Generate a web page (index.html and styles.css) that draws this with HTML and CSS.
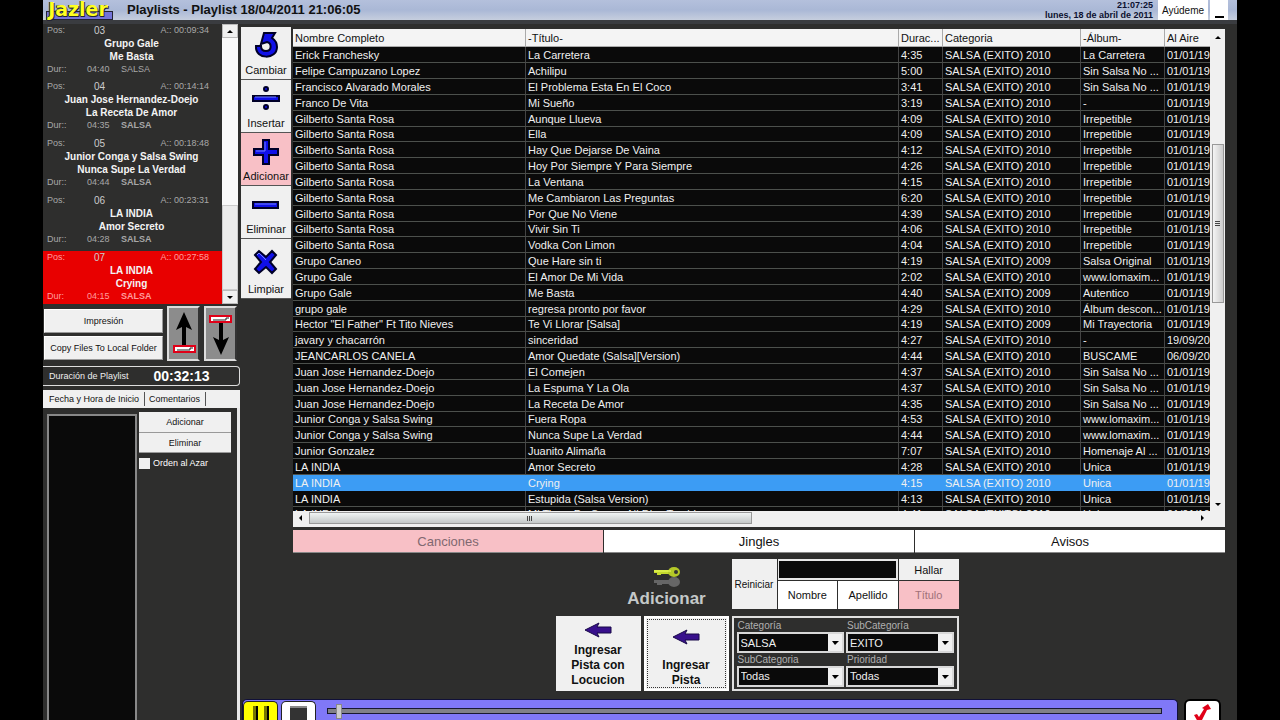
FILE: index.html
```
<!DOCTYPE html>
<html lang="es">
<head>
    <meta charset="UTF-8">
    <meta name="viewport" content="width=device-width, initial-scale=1.0">
    <title>Jazler - Playlists</title>
    <link rel="stylesheet" href="styles.css">
</head>
<body>

<div class="app">
    <header class="topbar">
        <div class="logo"><span>Jazler</span></div>
        <h1>Playlists - Playlist 18/04/2011 21:06:05</h1>
        <div class="clock">
            <div>21:07:25</div>
            <div>lunes, 18 de abril de 2011</div>
        </div>
        <button class="help">Ayúdeme</button>
        <button class="minimize" aria-label="Minimizar"><i></i></button>
    </header>

    <div class="main">
        <aside class="sidebar">
            <div class="queue">
                <div class="songs">
                    <div class="song">
                        <div class="meta"><span>Pos:</span><b>03</b><span class="at">A:: 00:09:34</span></div>
                        <div class="artist">Grupo Gale</div>
                        <div class="track">Me Basta</div>
                        <div class="meta"><span>Dur::</span><span class="dur">04:40</span><span>SALSA</span></div>
                    </div>
                    <div class="song">
                        <div class="meta"><span>Pos:</span><b>04</b><span class="at">A:: 00:14:14</span></div>
                        <div class="artist">Juan Jose Hernandez-Doejo</div>
                        <div class="track">La Receta De Amor</div>
                        <div class="meta"><span>Dur::</span><span class="dur">04:35</span><span class="cat">SALSA</span></div>
                    </div>
                    <div class="song">
                        <div class="meta"><span>Pos:</span><b>05</b><span class="at">A:: 00:18:48</span></div>
                        <div class="artist">Junior Conga y Salsa Swing</div>
                        <div class="track">Nunca Supe La Verdad</div>
                        <div class="meta"><span>Dur::</span><span class="dur">04:44</span><span class="cat">SALSA</span></div>
                    </div>
                    <div class="song">
                        <div class="meta"><span>Pos:</span><b>06</b><span class="at">A:: 00:23:31</span></div>
                        <div class="artist">LA INDIA</div>
                        <div class="track">Amor Secreto</div>
                        <div class="meta"><span>Dur::</span><span class="dur">04:28</span><span class="cat">SALSA</span></div>
                    </div>
                    <div class="song current">
                        <div class="meta"><span>Pos:</span><b>07</b><span class="at">A:: 00:27:58</span></div>
                        <div class="artist">LA INDIA</div>
                        <div class="track">Crying</div>
                        <div class="meta"><span>Dur:</span><span class="dur">04:15</span><span class="cat">SALSA</span></div>
                    </div>
                </div>
                <div class="queue-scroll" aria-hidden="true">
                    <div class="arrow"><svg width="6" height="3"><path d="M0 3 3 0 6 3z"/></svg></div>
                    <div class="track-space"></div>
                    <div class="thumb"></div>
                    <div class="arrow"><svg width="6" height="3"><path d="M0 0 3 3 6 0z"/></svg></div>
                </div>
            </div>

            <div class="actions">
                <div class="wide">
                    <button>Impresión</button>
                    <button>Copy Files To Local Folder</button>
                </div>
                <button class="move" aria-label="Subir">
                    <svg width="26" height="48" viewBox="0 0 26 48">
                        <path d="M13 2 21 20 15 17V36H11V17L5 20z"/>
                        <rect x="3" y="36" width="21" height="6" fill="#fff" stroke="#e00018" stroke-width="2"/>
                        <path d="M6 40H19V38H22" fill="none" stroke="#222"/>
                    </svg>
                </button>
                <button class="move" aria-label="Bajar">
                    <svg width="26" height="48" viewBox="0 0 26 48">
                        <path d="M13 45 21 27 15 30V10H11V30L5 27z"/>
                        <rect x="2" y="6" width="21" height="6" fill="#fff" stroke="#e00018" stroke-width="2"/>
                        <path d="M5 10H18V8H21" fill="none" stroke="#222"/>
                    </svg>
                </button>
            </div>

            <div class="duration"><span>Duración de Playlist</span><b>00:32:13</b></div>

            <div class="side-tabs">
                <button>Fecha y Hora de Inicio</button>
                <button>Comentarios</button>
            </div>
            <div class="schedule">
                <div class="dates"></div>
                <div class="schedule-actions">
                    <button>Adicionar</button>
                    <button>Eliminar</button>
                    <label><input type="checkbox">Orden al Azar</label>
                </div>
            </div>
        </aside>

        <section class="content">
            <div class="browser">
                <nav class="tools">
                    <button>
                        <svg width="26" height="26" viewBox="0 0 26 26"><path d="M22 1H11L8 12L14 10C19 11 19 19 13 19C10 19 8 17 8 14H3C2 28 24 28 24 15C24 11 22 8 19 6z"/></svg>
                        Cambiar
                    </button>
                    <button>
                        <svg width="28" height="26" viewBox="0 0 28 26"><path d="M1 11H27V16H1z"/><circle cx="14" cy="4" r="2"/><circle cx="14" cy="22" r="2"/><path class="shine" d="M3 12H24"/></svg>
                        Insertar
                    </button>
                    <button class="active">
                        <svg width="28" height="28" viewBox="0 0 28 28"><path d="M11 2H17V11H26V17H17V26H11V17H2V11H11z"/><path class="shine" d="M13 4V13H4"/></svg>
                        Adicionar
                    </button>
                    <button>
                        <svg width="28" height="26" viewBox="0 0 28 26"><path d="M1 11H26V17H1z"/><path class="shine" d="M3 13H24"/></svg>
                        Eliminar
                    </button>
                    <button class="tall">
                        <svg width="28" height="28" viewBox="0 0 28 28"><path d="M3 7 7 3 14 9 20 3 24 7 18 14 24 21 20 25 14 19 7 25 3 21 9 14z"/><path class="shine" d="M5 7 7 5 14 12"/></svg>
                        Limpiar
                    </button>
                </nav>

                <div class="library">
                    <div class="library-view">
                        <div class="rows">
                            <table>
                                <colgroup><col class="c-name"><col class="c-title"><col class="c-dur"><col class="c-cat"><col class="c-album"><col class="c-date"></colgroup>
                                <thead>
                                    <tr><th>Nombre Completo</th><th>-Título-</th><th>Durac...</th><th>Categoria</th><th>-Álbum-</th><th>Al Aire</th></tr>
                                </thead>
                                <tbody>
                                    <tr><td>Erick Franchesky</td><td>La Carretera</td><td>4:35</td><td>SALSA (EXITO) 2010</td><td>La Carretera</td><td>01/01/19</td></tr>
                                    <tr><td>Felipe Campuzano Lopez</td><td>Achilipu</td><td>5:00</td><td>SALSA (EXITO) 2010</td><td>Sin Salsa No ...</td><td>01/01/19</td></tr>
                                    <tr><td>Francisco Alvarado Morales</td><td>El Problema Esta En El Coco</td><td>3:41</td><td>SALSA (EXITO) 2010</td><td>Sin Salsa No ...</td><td>01/01/19</td></tr>
                                    <tr><td>Franco De Vita</td><td>Mi Sueño</td><td>3:19</td><td>SALSA (EXITO) 2010</td><td>-</td><td>01/01/19</td></tr>
                                    <tr><td>Gilberto Santa Rosa</td><td>Aunque Llueva</td><td>4:09</td><td>SALSA (EXITO) 2010</td><td>Irrepetible</td><td>01/01/19</td></tr>
                                    <tr><td>Gilberto Santa Rosa</td><td>Ella</td><td>4:09</td><td>SALSA (EXITO) 2010</td><td>Irrepetible</td><td>01/01/19</td></tr>
                                    <tr><td>Gilberto Santa Rosa</td><td>Hay Que Dejarse De Vaina</td><td>4:12</td><td>SALSA (EXITO) 2010</td><td>Irrepetible</td><td>01/01/19</td></tr>
                                    <tr><td>Gilberto Santa Rosa</td><td>Hoy Por Siempre Y Para Siempre</td><td>4:26</td><td>SALSA (EXITO) 2010</td><td>Irrepetible</td><td>01/01/19</td></tr>
                                    <tr><td>Gilberto Santa Rosa</td><td>La Ventana</td><td>4:15</td><td>SALSA (EXITO) 2010</td><td>Irrepetible</td><td>01/01/19</td></tr>
                                    <tr><td>Gilberto Santa Rosa</td><td>Me Cambiaron Las Preguntas</td><td>6:20</td><td>SALSA (EXITO) 2010</td><td>Irrepetible</td><td>01/01/19</td></tr>
                                    <tr><td>Gilberto Santa Rosa</td><td>Por Que No Viene</td><td>4:39</td><td>SALSA (EXITO) 2010</td><td>Irrepetible</td><td>01/01/19</td></tr>
                                    <tr><td>Gilberto Santa Rosa</td><td>Vivir Sin Ti</td><td>4:06</td><td>SALSA (EXITO) 2010</td><td>Irrepetible</td><td>01/01/19</td></tr>
                                    <tr><td>Gilberto Santa Rosa</td><td>Vodka Con Limon</td><td>4:04</td><td>SALSA (EXITO) 2010</td><td>Irrepetible</td><td>01/01/19</td></tr>
                                    <tr><td>Grupo Caneo</td><td>Que Hare sin ti</td><td>4:19</td><td>SALSA (EXITO) 2009</td><td>Salsa Original</td><td>01/01/19</td></tr>
                                    <tr><td>Grupo Gale</td><td>El Amor De Mi Vida</td><td>2:02</td><td>SALSA (EXITO) 2010</td><td>www.lomaxim...</td><td>01/01/19</td></tr>
                                    <tr><td>Grupo Gale</td><td>Me Basta</td><td>4:40</td><td>SALSA (EXITO) 2009</td><td>Autentico</td><td>01/01/19</td></tr>
                                    <tr><td>grupo gale</td><td>regresa pronto por favor</td><td>4:29</td><td>SALSA (EXITO) 2010</td><td>Álbum descon...</td><td>01/01/19</td></tr>
                                    <tr><td>Hector "El Father" Ft Tito Nieves</td><td>Te Vi Llorar [Salsa]</td><td>4:19</td><td>SALSA (EXITO) 2009</td><td>Mi Trayectoria</td><td>01/01/19</td></tr>
                                    <tr><td>javary y chacarrón</td><td>sinceridad</td><td>4:27</td><td>SALSA (EXITO) 2010</td><td>-</td><td>19/09/20</td></tr>
                                    <tr><td>JEANCARLOS CANELA</td><td>Amor Quedate (Salsa][Version)</td><td>4:44</td><td>SALSA (EXITO) 2010</td><td>BUSCAME</td><td>06/09/20</td></tr>
                                    <tr><td>Juan Jose Hernandez-Doejo</td><td>El Comejen</td><td>4:37</td><td>SALSA (EXITO) 2010</td><td>Sin Salsa No ...</td><td>01/01/19</td></tr>
                                    <tr><td>Juan Jose Hernandez-Doejo</td><td>La Espuma Y La Ola</td><td>4:37</td><td>SALSA (EXITO) 2010</td><td>Sin Salsa No ...</td><td>01/01/19</td></tr>
                                    <tr><td>Juan Jose Hernandez-Doejo</td><td>La Receta De Amor</td><td>4:35</td><td>SALSA (EXITO) 2010</td><td>Sin Salsa No ...</td><td>01/01/19</td></tr>
                                    <tr><td>Junior Conga y Salsa Swing</td><td>Fuera Ropa</td><td>4:53</td><td>SALSA (EXITO) 2010</td><td>www.lomaxim...</td><td>01/01/19</td></tr>
                                    <tr><td>Junior Conga y Salsa Swing</td><td>Nunca Supe La Verdad</td><td>4:44</td><td>SALSA (EXITO) 2010</td><td>www.lomaxim...</td><td>01/01/19</td></tr>
                                    <tr><td>Junior Gonzalez</td><td>Juanito Alimaña</td><td>7:07</td><td>SALSA (EXITO) 2010</td><td>Homenaje Al ...</td><td>01/01/19</td></tr>
                                    <tr><td>LA INDIA</td><td>Amor Secreto</td><td>4:28</td><td>SALSA (EXITO) 2010</td><td>Unica</td><td>01/01/19</td></tr>
                                    <tr class="selected"><td>LA INDIA</td><td>Crying</td><td>4:15</td><td>SALSA (EXITO) 2010</td><td>Unica</td><td>01/01/19</td></tr>
                                    <tr><td>LA INDIA</td><td>Estupida (Salsa Version)</td><td>4:13</td><td>SALSA (EXITO) 2010</td><td>Unica</td><td>01/01/19</td></tr>
                                    <tr><td>LA INDIA</td><td>Mi Tierra De Somos Ni Dios Tambien</td><td>4:41</td><td>SALSA (EXITO) 2010</td><td>Unica</td><td>01/01/19</td></tr>
                                </tbody>
                            </table>
                        </div>
                        <div class="vscroll" aria-hidden="true">
                            <svg width="6" height="3"><path d="M0 3 3 0 6 3z"/></svg>
                            <div class="before"></div>
                            <div class="thumb"><i></i></div>
                            <div class="after"></div>
                            <svg width="6" height="3"><path d="M0 0 3 3 6 0z"/></svg>
                        </div>
                    </div>
                    <div class="hscroll" aria-hidden="true">
                        <svg width="3" height="6"><path d="M3 0 0 3 3 6z"/></svg>
                        <div class="thumb"><i></i></div>
                        <div class="after"></div>
                        <svg width="3" height="6"><path d="M0 0 3 3 0 6z"/></svg>
                    </div>
                </div>
            </div>

            <div class="tabs">
                <button class="active">Canciones</button>
                <button>Jingles</button>
                <button>Avisos</button>
            </div>

            <div class="controls">
                <div class="insert">
                    <div class="mode">
                        <svg width="28" height="22" viewBox="0 0 28 22">
                            <g fill="#666"><path d="M1 14H17V18H9V19H4V17H1z"/><ellipse cx="21" cy="16" rx="6" ry="5"/></g>
                            <path d="M1 4H16V8H8V9H4V7H1z" fill="#c4d82e"/>
                            <ellipse cx="21" cy="6" rx="6" ry="5" fill="#b4c828"/>
                            <path d="M1 5H18" stroke="#f0ff60"/>
                            <circle cx="23" cy="6" r="2" fill="#333"/>
                        </svg>
                        <h2>Adicionar</h2>
                    </div>
                    <div class="insert-buttons">
                        <button>
                            <svg width="28" height="16" viewBox="0 0 28 16"><path d="M1 8 15 1 13 5H27V11H13L15 15z"/></svg>
                            Ingresar<br>Pista con<br>Locucion
                        </button>
                        <button class="focused">
                            <svg width="28" height="16" viewBox="0 0 28 16"><path d="M1 8 15 1 13 5H27V11H13L15 15z"/></svg>
                            Ingresar<br>Pista
                        </button>
                    </div>
                </div>

                <div class="finder">
                    <form class="search">
                        <button type="reset" class="reset">Reiniciar</button>
                        <input type="text" aria-label="Buscar">
                        <button type="button" class="find">Hallar</button>
                        <button type="button">Nombre</button>
                        <button type="button">Apellido</button>
                        <button type="button" class="active">Título</button>
                    </form>
                    <div class="filters">
                        <div>
                            <label for="cat">Categoría</label>
                            <select id="cat"><option>SALSA</option></select>
                        </div>
                        <div>
                            <label for="subcat">SubCategoría</label>
                            <select id="subcat"><option>EXITO</option></select>
                        </div>
                        <div>
                            <label for="subcat2">SubCategoria</label>
                            <select id="subcat2"><option>Todas</option></select>
                        </div>
                        <div>
                            <label for="prio">Prioridad</label>
                            <select id="prio"><option>Todas</option></select>
                        </div>
                    </div>
                </div>
            </div>

            <footer class="footer">
                <div class="player">
                    <button class="pause" aria-label="Pausa"><i></i><i></i></button>
                    <button class="stop" aria-label="Parar"><i></i></button>
                    <input type="range" min="0" max="100" value="1" aria-label="Posición">
                </div>
                <button class="accept" aria-label="Aceptar">
                    <svg width="20" height="18" viewBox="0 0 20 18"><path d="M1 11 4 10 6 13 11 5 9 4 15 0 18 5 14 6 8 18H5z" fill="#e00018"/></svg>
                </button>
            </footer>
        </section>
    </div>
</div>

</body>
</html>
```
FILE: styles.css
```
* {
    box-sizing: border-box;
}

body {
    margin: 0;
    background-color: #000;
    font-family: "Liberation Sans", Arial, sans-serif;
    font-size: 11px;
    color: #111;
}

button {
    padding: 0;
    border: 0;
    border-radius: 0;
    background-color: #f0f0f0;
    color: #111;
    font-family: inherit;
    font-size: 11px;
}

h1, h2 {
    margin: 0;
}

svg {
    display: block;
    flex: none;
}

.app {
    display: flex;
    flex-direction: column;
    height: 100vh;
    margin: 0 43px;
    overflow: hidden;
    background-color: #2e2e2d;
}

/* top bar */
.topbar {
    display: flex;
    flex: none;
    height: 24px;
    padding-right: 9px;
    border-bottom: 4px solid #3a3c40;
    background: linear-gradient(#b4c0dc, #aab8d6 50%, #c6cede);
}

.logo {
    display: flex;
    align-items: flex-end;
    justify-content: center;
    width: 67px;
    margin: 11px 14px 0 3px;
    padding-right: 3px;
    border: 1px solid #223;
    background-color: #7474d8;
}

.logo span {
    color: #ffff20;
    font-family: "DejaVu Sans", sans-serif;
    font-size: 19px;
    font-weight: bold;
    line-height: 19px;
    text-shadow: -1px 0 #223, 1px 1px #223, 0 1px #223;
}

.topbar h1 {
    flex: 1;
    font-size: 13px;
    line-height: 20px;
}

.clock {
    margin-right: 5px;
    font-size: 9px;
    font-weight: bold;
    line-height: 10px;
    text-align: right;
    color: #0c1030;
}

.topbar button {
    height: 20px;
    background-color: #fff;
}

.help {
    width: 50px;
    margin-right: 2px;
    font-size: 10px;
}

.minimize {
    display: flex;
    align-items: flex-end;
    justify-content: center;
    width: 18px;
    padding-bottom: 2px;
}

.minimize i {
    width: 9px;
    height: 2px;
    background-color: #000;
}

.main {
    display: flex;
    flex: 1;
    min-height: 0;
}

/* left column */
.sidebar {
    display: flex;
    flex-direction: column;
    flex: none;
    width: 197px;
}

.queue {
    display: flex;
    height: 280px;
    margin-right: 2px;
}

.songs {
    display: grid;
    grid-template-rows: 56px 57px 57px 57px 53px;
    flex: 1;
}

.song {
    overflow: hidden;
    color: #a8a8a8;
}

.song.current {
    background-color: #e80000;
    color: #ff9c9c;
}

.meta {
    display: grid;
    grid-template-columns: 40px 34px 1fr;
    padding-left: 4px;
    font-size: 9px;
    line-height: 13px;
}

.meta b {
    padding-left: 7px;
    font-size: 10px;
    font-weight: normal;
    color: #ccc;
}

.meta .at {
    justify-self: end;
    padding-right: 13px;
}

.cat {
    font-weight: bold;
}

.artist, .track {
    padding-right: 2px;
    font-size: 10px;
    font-weight: bold;
    line-height: 13px;
    text-align: center;
    color: #f4f4f4;
}

.queue-scroll {
    display: flex;
    flex-direction: column;
    width: 16px;
    background-color: #fafafa;
}

.queue-scroll .arrow {
    display: flex;
    align-items: center;
    justify-content: center;
    height: 14px;
    border: 1px solid #bbb;
    background-color: #f0f0f0;
}

.queue-scroll .track-space {
    flex: 2;
}

.queue-scroll .thumb {
    flex: 1;
    border: 1px solid #ccc;
    background-color: #ececec;
}

.actions {
    display: flex;
    gap: 4px;
    height: 55px;
    margin: 2px 3px 0 1px;
}

.actions .wide {
    display: grid;
    flex: 1;
    gap: 3px;
    padding: 3px 0 1px;
}

.sidebar button {
    font-size: 9px;
}

.actions .wide button {
    border: 1px solid #fff;
    border-right-color: #999;
    border-bottom-color: #999;
}

.actions .move {
    display: flex;
    align-items: center;
    justify-content: center;
    width: 33px;
    border: 2px solid #ddd;
    border-right-color: #333;
    background-color: #8c8c8c;
}

.duration {
    display: flex;
    align-items: center;
    height: 20px;
    margin-top: 5px;
    padding-left: 6px;
    border: 1px solid #ddd;
    border-left: 0;
    border-radius: 0 4px 4px 0;
    color: #eee;
    font-size: 9px;
}

.duration b {
    margin-left: 25px;
    font-size: 14px;
    color: #fff;
}

.side-tabs {
    display: flex;
    height: 18px;
    margin-top: 4px;
    background-color: #f0f0f0;
}

.side-tabs button {
    margin: 2px 0;
    padding: 0 5px 0 6px;
    border-right: 1px solid #555;
}

.side-tabs button + button {
    padding-left: 4px;
}

.schedule {
    display: flex;
    flex: 1;
    gap: 2px;
    padding: 4px 6px 0 4px;
    border-right: 3px solid #e8e8e8;
}

.dates {
    width: 90px;
    margin-top: 2px;
    border: 2px solid #888;
    border-bottom: 0;
    background-color: #0a0a0a;
}

.schedule-actions {
    flex: 1;
}

.schedule-actions button {
    display: block;
    width: 100%;
    height: 21px;
    border-bottom: 1px solid #999;
}

.schedule-actions button + button {
    height: 20px;
}

.schedule-actions label {
    display: flex;
    align-items: center;
    gap: 3px;
    height: 20px;
    color: #fff;
    font-size: 9px;
}

.schedule-actions input {
    width: 11px;
    height: 11px;
    margin: 0;
    appearance: none;
    background-color: #f0f0f0;
}

/* right column */
.content {
    display: flex;
    flex-direction: column;
    flex: 1;
    min-width: 0;
}

.browser {
    display: flex;
    flex: 1;
    gap: 2px;
    min-height: 0;
    padding: 3px 12px 3px 1px;
}

.tools button {
    display: flex;
    flex-direction: column;
    align-items: center;
    justify-content: space-between;
    width: 50px;
    height: 53px;
    padding: 5px 0 3px;
    border-bottom: 1px solid #555;
}

.tools .tall {
    height: 60px;
    padding-top: 9px;
}

.tools svg {
    fill: #1010e8;
    stroke: #000028;
    stroke-width: 2;
}

.tools .shine {
    fill: none;
    stroke: #7080ff;
    stroke-width: 1;
}

button.active {
    background-color: #f8c0c6;
}

.library {
    display: flex;
    flex-direction: column;
    flex: 1;
    min-width: 0;
    margin-top: 2px;
    background-color: #f0f0f0;
}

.library-view {
    display: flex;
    flex: 1;
    min-height: 0;
}

.rows {
    flex: 1;
    overflow: hidden;
    background-color: #0a0a0a;
}

table {
    width: 100%;
    table-layout: fixed;
    border-spacing: 0;
}

.c-name {
    width: 233px;
}

.c-dur {
    width: 44px;
}

.c-cat {
    width: 138px;
}

.c-album {
    width: 84px;
}

.c-date {
    width: 45px;
}

th, td {
    height: 16px;
    padding: 1px 0 0 2px;
    overflow: hidden;
    border-right: 1px solid #444;
    border-bottom: 1px solid #4c504c;
    line-height: 14px;
    text-align: left;
    white-space: nowrap;
    color: #f0f0f0;
}

th {
    height: 18px;
    border-color: #aaa;
    background-color: #f4f4f4;
    font-weight: normal;
    color: #111;
}

th:last-child, td:last-child {
    border-right: 0;
}

tbody tr:nth-child(6n) td {
    height: 15px;
    line-height: 13px;
}

.selected td {
    border-color: #3c9cf4;
    background-color: #3c9cf4;
}

.vscroll {
    display: flex;
    flex-direction: column;
    align-items: center;
    width: 15px;
    padding: 7px 0 5px;
}

.vscroll .before {
    flex: 105;
}

.vscroll .after {
    flex: 200;
}

.thumb {
    display: flex;
    align-items: center;
    justify-content: center;
}

.vscroll .thumb {
    flex: 158;
    width: 12px;
    border: 1px solid #999;
    background: linear-gradient(90deg, #f4f4f4, #ccc);
}

.vscroll i {
    width: 5px;
    height: 6px;
    background: repeating-linear-gradient(#444 0 1px, transparent 1px 2px);
}

.hscroll {
    display: flex;
    align-items: center;
    height: 16px;
    padding: 0 21px 2px 6px;
}

.hscroll .thumb {
    flex: 440;
    height: 12px;
    margin-left: 7px;
    border: 1px solid #999;
    background: linear-gradient(#f0f4f4, #c4c8c8);
}

.hscroll i {
    width: 6px;
    height: 5px;
    background: repeating-linear-gradient(90deg, #444 0 1px, transparent 1px 2px);
}

.hscroll .after {
    flex: 449;
}

.tabs {
    display: grid;
    grid-template-columns: repeat(3, 1fr);
    flex: none;
    gap: 1px;
    height: 23px;
    margin: 0 12px 0 53px;
}

.tabs button {
    border-bottom: 1px solid #888;
    background-color: #fff;
    font-size: 13px;
}

.tabs button.active {
    background-color: #f8c0c6;
    color: #806870;
}

/* insert and search controls */
.controls {
    display: flex;
    flex: none;
    justify-content: center;
    gap: 3px;
    margin: 6px 16px 8px 53px;
}

.insert {
    display: flex;
    flex-direction: column;
    justify-content: space-between;
}

.mode {
    display: flex;
    flex-direction: column;
    align-items: center;
    gap: 1px;
    margin-left: 49px;
    padding-top: 7px;
}

.mode h2 {
    font-size: 17px;
    line-height: 20px;
    color: #c4c8c8;
}

.insert-buttons {
    display: flex;
    gap: 3px;
}

.insert-buttons button {
    display: flex;
    flex-direction: column;
    align-items: center;
    justify-content: space-between;
    width: 85px;
    height: 75px;
    padding: 6px 0 3px;
    font-size: 12px;
    font-weight: bold;
    line-height: 15px;
}

.insert-buttons svg {
    fill: #38108c;
    stroke: #180848;
}

.insert-buttons .focused {
    padding: 11px 0 1px;
    border: 2px solid #fff;
    outline: 1px dotted #333;
    outline-offset: -4px;
}

.finder {
    display: flex;
    flex-direction: column;
    gap: 7px;
    width: 227px;
}

.search {
    display: grid;
    grid-template-columns: 45px 1fr 1fr 1fr;
    grid-template-rows: 21px 28px;
    gap: 1px;
}

.search .reset {
    grid-row: span 2;
    font-size: 10px;
}

.search input {
    grid-column: span 2;
    min-width: 0;
    padding: 0 3px;
    border: 2px solid #e8e8e8;
    border-left-width: 1px;
    background-color: #0a0a0a;
    color: #fff;
}

.search button {
    background-color: #fff;
}

.search .reset, .search .find {
    background-color: #f0f0f0;
}

.search .active {
    background-color: #f8c0c6;
    color: #a07078;
}

.filters {
    display: grid;
    grid-template-columns: 1fr 1fr;
    gap: 0 2px;
    height: 75px;
    padding: 2px 3px;
    border: 2px solid #e0e0e0;
}

.filters label {
    display: block;
    padding-left: 1px;
    font-size: 10px;
    line-height: 12px;
    color: #b0b0b0;
}

.filters select {
    display: block;
    width: 100%;
    height: 21px;
    padding: 0 2px;
    border: 2px solid #d8d8d8;
    border-radius: 0;
    appearance: none;
    background: #0a0a0a url("data:image/svg+xml,%3Csvg xmlns='http://www.w3.org/2000/svg' width='14' height='17'%3E%3Cpath fill='%23f0f0f0' d='M0 0h14v17H0z'/%3E%3Cpath d='M4 7h7L7 11z'/%3E%3C/svg%3E") right center no-repeat;
    color: #f0f0f0;
    font-family: inherit;
    font-size: 11px;
}

/* player */
.footer {
    display: flex;
    flex: none;
    gap: 6px;
    height: 21px;
    padding: 0 16px 0 2px;
}

.player {
    display: flex;
    flex: 1;
    gap: 3px;
    padding: 1px 15px 0 0;
    border: 1px solid #101038;
    border-bottom: 0;
    border-radius: 5px 5px 0 0;
    background-color: #8078f8;
}

.player button {
    display: flex;
    justify-content: center;
    gap: 6px;
    width: 35px;
    padding-top: 4px;
    border: 1px solid #222;
    border-bottom: 0;
    border-radius: 5px 5px 0 0;
}

.player .pause {
    background-color: #ffff00;
}

.pause i {
    width: 5px;
    height: 15px;
    border-right: 2px solid #000;
    background-color: #777700;
}

.player .stop {
    background-color: #fff;
}

.stop i {
    width: 17px;
    height: 15px;
    border-top: 2px solid #888;
    background-color: #333;
}

.player input {
    flex: 1;
    height: 6px;
    margin: 7px 0 0 8px;
    appearance: none;
    border: 1px solid #181830;
    background-color: #808088;
}

.player input::-webkit-slider-thumb {
    width: 6px;
    height: 15px;
    appearance: none;
    border: 1px solid #888;
    background-color: #ccc;
}

.accept {
    display: flex;
    justify-content: center;
    width: 37px;
    padding-top: 3px;
    border: 2px solid #000;
    border-bottom: 0;
    border-radius: 6px 6px 0 0;
    background-color: #fff;
}
```
